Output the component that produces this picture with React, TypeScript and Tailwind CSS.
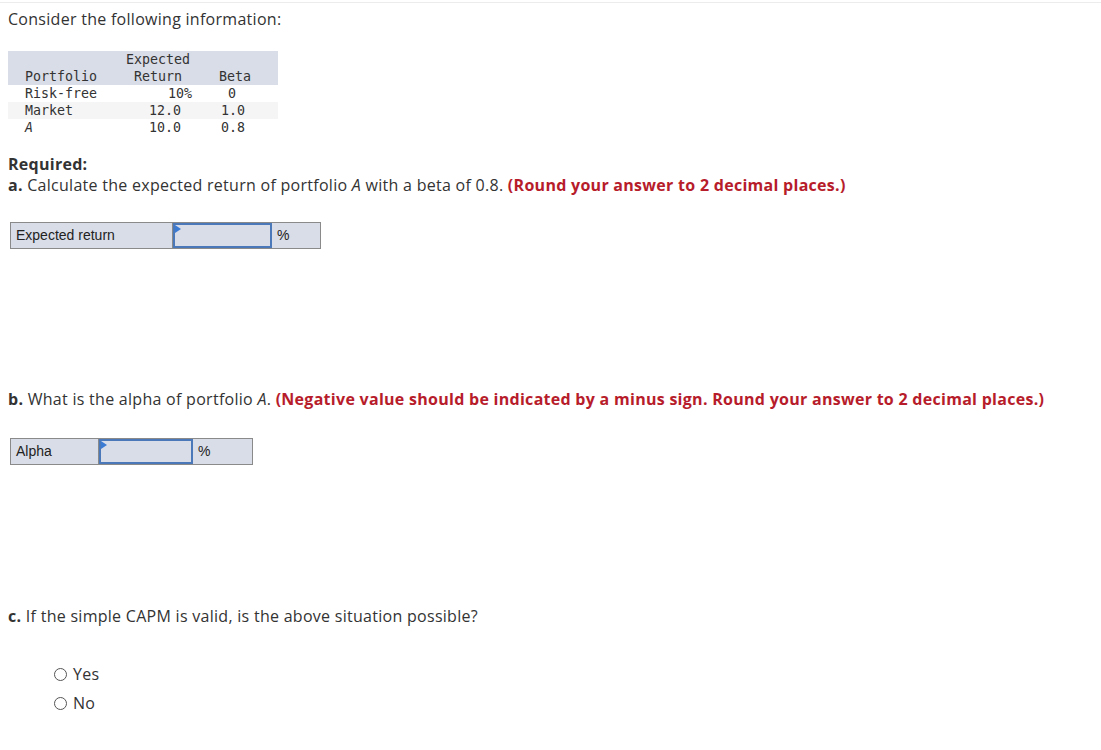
import React from 'react';

const sans = "font-['Open_Sans','Liberation_Sans',sans-serif]";
const mono = "font-['DejaVu_Sans_Mono','Liberation_Mono',monospace]";

function AnswerRow({ label, labelW, inputW, unitW }: { label: string; labelW: string; inputW: string; unitW: string }) {
  return (
    <div className="flex h-[27px] border border-[#8a8a8a] bg-[#d9dde7] font-['Liberation_Sans',Arial,sans-serif] text-[14px] tracking-normal text-[#222]">
      <div className={`${labelW} flex items-center border-r border-[#8a8a8a] pl-[5px]`}>{label}</div>
      <div className={`${inputW} relative border-2 border-[#4a78b8]`}>
        <span className="absolute left-0 top-0 h-0 w-0 border-y-[4px] border-l-[6px] border-y-transparent border-l-[#3b7bd4]" />
      </div>
      <div className={`${unitW} flex items-center pl-[5px]`}>%</div>
    </div>
  );
}

function Radio({ label }: { label: string }) {
  return (
    <label className="flex items-center gap-[6px]">
      <span className="h-[13px] w-[13px] rounded-full border border-[#555] bg-white" />
      <span>{label}</span>
    </label>
  );
}

export default function App() {
  return (
    <div className={`min-h-[750px] bg-white ${sans} text-[16px] tracking-[0.28px] text-[#333]`}>
      <div className="h-[3px] border-b border-[#ececec]" />
      <div className="px-[8px]">
        <p className="mt-[6px] leading-[20px]">Consider the following information:</p>

        <table className={`mt-[22px] ${mono} text-[13.3px] leading-[17px] tracking-normal text-[#333]`}>
          <thead className="bg-[#d9dde7]">
            <tr>
              <th className="w-[110px] pl-[17px] text-left align-bottom font-normal">Portfolio</th>
              <th className="w-[80px] text-center font-normal">
                Expected
                <br />
                Return
              </th>
              <th className="w-[80px] pr-[6px] text-center align-bottom font-normal">Beta</th>
            </tr>
          </thead>
          <tbody>
            <tr>
              <td className="pl-[17px]">Risk-free</td>
              <td className="pr-[6px] text-right">10%</td>
              <td className="pr-[42px] text-right">0</td>
            </tr>
            <tr className="bg-[#f5f5f5]">
              <td className="pl-[17px]">Market</td>
              <td className="pr-[17px] text-right">12.0</td>
              <td className="pr-[33px] text-right">1.0</td>
            </tr>
            <tr>
              <td className="pl-[17px] italic">A</td>
              <td className="pr-[17px] text-right">10.0</td>
              <td className="pr-[33px] text-right">0.8</td>
            </tr>
          </tbody>
        </table>

        <p className="mt-[18px] font-bold leading-[20px]">Required:</p>
        <p className="leading-[22px]">
          <b>a.</b> Calculate the expected return of portfolio <i>A</i> with a beta of 0.8.{' '}
          <b className="text-[#b71c2b]">(Round your answer to 2 decimal places.)</b>
        </p>

        <div className="mt-[26px] ml-[2px] w-fit">
          <AnswerRow label="Expected return" labelW="w-[162px]" inputW="w-[99px]" unitW="w-[48px]" />
        </div>

        <p className="mt-[139px] leading-[22px]">
          <b>b.</b> What is the alpha of portfolio <i>A</i>.{' '}
          <b className="text-[#b71c2b]">
            (Negative value should be indicated by a minus sign. Round your answer to 2 decimal places.)
          </b>
        </p>

        <div className="mt-[28px] ml-[2px] w-fit">
          <AnswerRow label="Alpha" labelW="w-[88px]" inputW="w-[94px]" unitW="w-[59px]" />
        </div>

        <p className="mt-[140px] leading-[22px]">
          <b>c.</b> If the simple CAPM is valid, is the above situation possible?
        </p>

        <div className="mt-[36px] ml-[46px] flex flex-col gap-[7px] leading-[22px]">
          <Radio label="Yes" />
          <Radio label="No" />
        </div>
      </div>
    </div>
  );
}
